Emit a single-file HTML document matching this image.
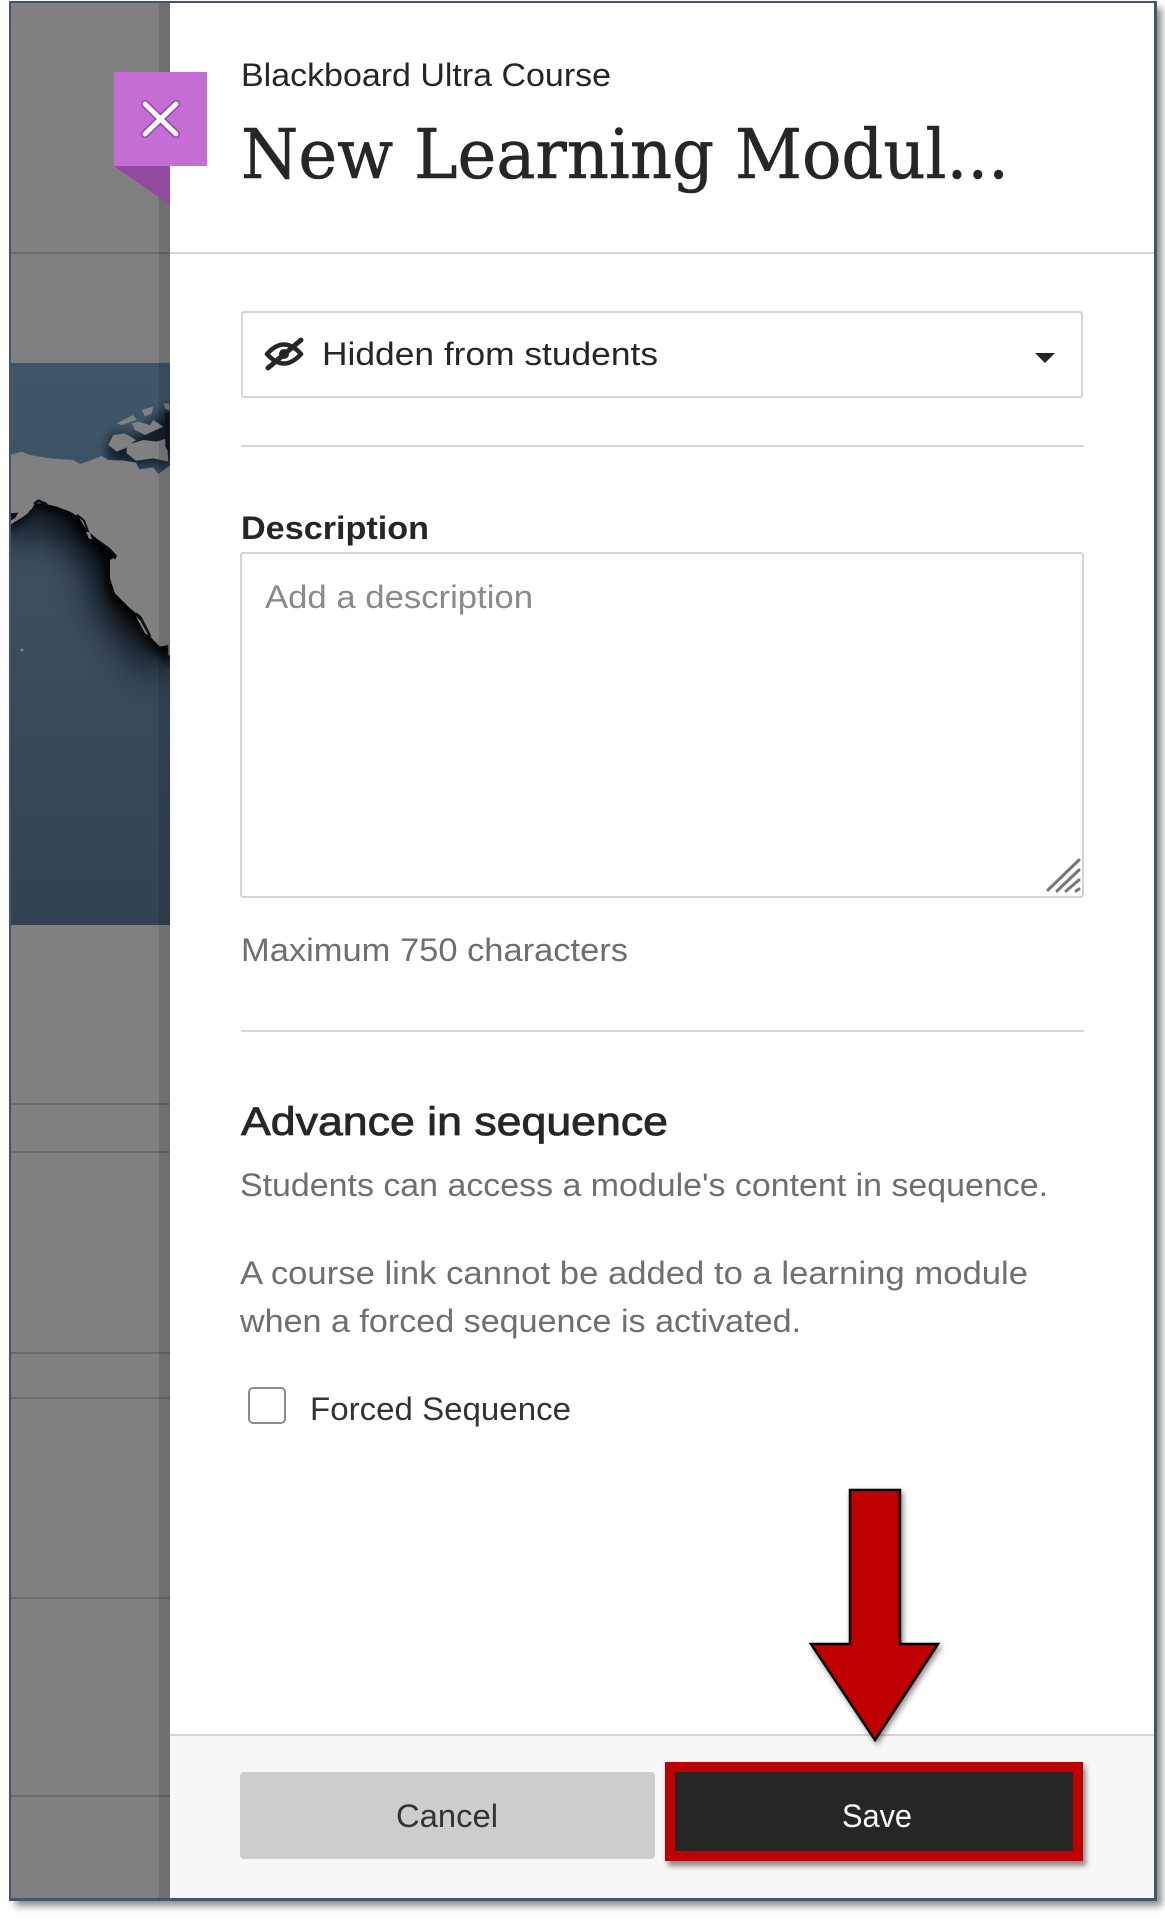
<!DOCTYPE html>
<html lang="en"><head><meta charset="utf-8"><title>New Learning Module</title>
<style>
html,body{margin:0;padding:0;background:#fff;width:1165px;height:1919px;overflow:hidden}
.a{position:absolute;box-sizing:border-box}
#frame{left:10px;top:2px;width:1147px;height:1898px;box-shadow:5px 6px 7px rgba(0,0,0,.45)}
#bg{left:10px;top:2px;width:160px;height:1898px;background:#808080}
#panel{left:170px;top:2px;width:986px;height:1898px;background:#fff}
#foot{left:170px;top:1734px;width:986px;height:166px;background:#f8f8f8;border-top:2px solid #d6d6d6}
.hr{height:2px;background:#d6d6d6}
.box{background:#fff;border:2px solid #d4d4d4;border-radius:3px}
#border{left:9px;top:1px;width:1148px;height:1900px;border:solid #44546a;border-width:2px 3px 3px 2px}
svg{position:absolute;left:0;top:0}
text{font-family:"Liberation Sans",sans-serif;font-size:32px;fill:#262626}
</style></head><body>
<div class="a" id="frame"></div>
<div class="a" id="bg"></div>
<div class="a" id="panel"></div>
<div class="a box" style="left:241px;top:311px;width:842px;height:87px"></div>
<div class="a hr" style="left:241px;top:445px;width:843px"></div>
<div class="a box" style="left:240px;top:552px;width:844px;height:346px"></div>
<div class="a hr" style="left:241px;top:1030px;width:843px"></div>
<div class="a" style="left:248px;top:1387px;width:38px;height:37px;border:2px solid #8c8c8c;border-radius:5px;background:#fff"></div>
<div class="a" id="foot"></div>
<div class="a" style="left:240px;top:1772px;width:415px;height:87px;background:#cdcdcd;border-radius:4px"></div>
<div class="a" style="left:665px;top:1762px;width:418px;height:99px;background:#262626;border:10px solid #c00000;box-shadow:3px 5px 5px rgba(0,0,0,.45)"></div>

<svg width="1165" height="1919" viewBox="0 0 1165 1919">
  <defs>
    <clipPath id="mapclip"><rect x="10" y="363" width="160" height="562"/></clipPath>
    <filter id="sh" filterUnits="userSpaceOnUse" x="-400" y="-200" width="1400" height="1400"><feGaussianBlur stdDeviation="60"/></filter>
    <filter id="sh2" filterUnits="userSpaceOnUse" x="-400" y="-200" width="1400" height="1400"><feGaussianBlur stdDeviation="14"/></filter>
    <linearGradient id="sea" x1="0" y1="0" x2="0" y2="1"><stop offset="0" stop-color="#3f566a"/><stop offset="1" stop-color="#334351"/></linearGradient>
    <filter id="ds" x="-20%" y="-20%" width="140%" height="140%"><feDropShadow dx="2" dy="3" stdDeviation="3" flood-color="#000" flood-opacity=".45"/></filter>
  </defs>

  <g clip-path="url(#mapclip)">
    <rect x="10" y="363" width="160" height="562" fill="url(#sea)"/>
    <g transform="translate(10,390) scale(.3333)">
      <path d="M0 260 L340 260 L500 260 L500 810 L475 795 L450 770 L420 740 L385 675 L360 655 L315 610 L300 565 L300 510 L300 480 L265 450 L230 420 L205 380 L180 365 L140 350 L100 340 L75 340 L60 365 L40 380 L0 405Z" fill="#000" filter="url(#sh)" transform="translate(-40,60)"/>
      <path d="M0 260 L340 260 L500 260 L500 810 L475 795 L450 770 L420 740 L385 675 L360 655 L315 610 L300 565 L300 510 L300 480 L265 450 L230 420 L205 380 L180 365 L140 350 L100 340 L75 340 L60 365 L40 380 L0 405Z" fill="#000" filter="url(#sh2)" transform="translate(-12,18)" opacity=".9"/>
      <path d="M290 170 L310 130 L378 140 L470 60 L500 40 L500 225 L380 225 L300 215Z" fill="#0b1722" filter="url(#sh2)" opacity=".85"/>
      <!-- mainland -->
      <path d="M0 195 L35 185 L60 195 L120 205 L190 210 L210 222 L240 212 L275 198 L295 210 L340 212 L378 218 L388 238 L430 232 L445 252 L478 228 L500 228 L500 810 L475 795 L475 765 L450 770 L420 740 L385 675 L360 655 L315 610 L300 565 L300 510 L318 500 L300 480 L265 450 L230 420 L205 380 L180 365 L140 350 L100 340 L75 340 L60 365 L40 380 L0 405Z" fill="#808080"/>
      <!-- coastal detail -->
      <g fill="none" stroke="#0a1118" stroke-linecap="round">
        <path d="M75 340 L85 332 L108 342" stroke-width="8"/>
        <path d="M203 376 L222 392 L232 418 M232 420 L246 448" stroke-width="6"/>
        <path d="M265 452 L300 478 L318 498 L314 505" stroke-width="6"/>
        <path d="M380 672 L392 682 L420 738" stroke-width="7"/>
        <path d="M62 362 L50 385" stroke-width="6"/>
      </g>
      <path d="M0 370 L25 368 L15 385 L0 392Z" fill="#0a1118"/>
      <path d="M228 425 L240 428 L246 448 L236 445Z" fill="#808080"/>
      <path d="M378 680 L390 690 L415 735 L405 730Z" fill="#808080"/>
      <!-- arctic islands -->
      <path d="M295 165 L310 135 L345 130 L378 150 L345 175 L320 185Z" fill="#808080"/>
      <path d="M350 165 L400 150 L440 155 L470 145 L475 215 L430 205 L378 212 L350 190Z" fill="#808080"/>
      <path d="M320 100 L370 75 L380 90 L335 105Z" fill="#808080"/>
      <path d="M365 100 L385 95 L420 105 L430 90 L460 110 L405 135 L375 120Z" fill="#808080"/>
      <path d="M395 60 L430 50 L425 70 L405 80Z" fill="#808080"/>
      <path d="M460 40 L478 40 L478 62 L466 55Z" fill="#808080"/>
      <path d="M465 68 L478 65 L478 190 L466 170Z" fill="#0d1822"/>
      <circle cx="36" cy="780" r="4" fill="#8a8a8a"/>
    </g>
  </g>
  <g fill="#6b6b6b">
    <rect x="10" y="252" width="160" height="2"/>
    <rect x="10" y="1103" width="160" height="2"/>
    <rect x="10" y="1151" width="160" height="2"/>
    <rect x="10" y="1352" width="160" height="2"/>
    <rect x="10" y="1397" width="160" height="2"/>
    <rect x="10" y="1597" width="160" height="2"/>
    <rect x="10" y="1795" width="160" height="2"/>
  </g>
  <rect x="159" y="2" width="11" height="1898" fill="#000" opacity=".13"/>
  <rect x="170" y="252" width="986" height="2" fill="#d6d6d6"/>

  <!-- close tab -->
  <polygon points="114,166 170,166 170,205" fill="#924a9e"/>
  <rect x="114" y="72" width="93" height="94" fill="#c36dd5"/>
  <g stroke-linecap="round">
    <path d="M145 104 L176 134 M176 104 L145 134" stroke="#9448a8" stroke-width="8"/>
    <path d="M145 104 L176 134 M176 104 L145 134" stroke="#fff" stroke-width="5"/>
  </g>

  <!-- header -->
  <text x="241" y="86" textLength="370" lengthAdjust="spacingAndGlyphs">Blackboard Ultra Course</text>
  <text x="241" y="178" textLength="768" lengthAdjust="spacingAndGlyphs" style="font-family:'DejaVu Serif','Liberation Serif',serif;font-size:68px;stroke:#262626;stroke-width:.6px">New Learning Modul...</text>

  <!-- select -->
  <g fill="none" stroke="#262626" stroke-width="4.5" stroke-linecap="round" stroke-linejoin="round">
    <path d="M267 354 Q284 335 301 354 Q284 373 267 354Z"/>
    <path d="M268 368 L301 340" stroke-width="5"/>
  </g>
  <circle cx="284" cy="354" r="5" fill="#262626"/>
  <text x="322" y="365" textLength="336" lengthAdjust="spacingAndGlyphs">Hidden from students</text>
  <polygon points="1035,353 1055,353 1045,363" fill="#262626"/>

  <!-- description -->
  <text x="241" y="539" textLength="188" lengthAdjust="spacingAndGlyphs" font-weight="700">Description</text>
  <text x="265" y="608" textLength="268" lengthAdjust="spacingAndGlyphs" style="fill:#8a8a8a">Add a description</text>
  <g stroke="#777" stroke-width="3" stroke-linecap="round">
    <path d="M1048 890 L1079 860 M1057 891 L1079 870 M1066 891 L1079 880 M1076 891 L1079 889"/>
  </g>
  <text x="241" y="961" textLength="387" lengthAdjust="spacingAndGlyphs" style="fill:#6f6f6f">Maximum 750 characters</text>

  <!-- sequence -->
  <text x="241" y="1135" textLength="427" lengthAdjust="spacingAndGlyphs" style="font-size:40px;stroke:#262626;stroke-width:.8px">Advance in sequence</text>
  <text x="240" y="1196" textLength="808" lengthAdjust="spacingAndGlyphs" style="fill:#6f6f6f">Students can access a module's content in sequence.</text>
  <text x="240" y="1284" textLength="788" lengthAdjust="spacingAndGlyphs" style="fill:#6f6f6f">A course link cannot be added to a learning module</text>
  <text x="240" y="1332" textLength="561" lengthAdjust="spacingAndGlyphs" style="fill:#6f6f6f">when a forced sequence is activated.</text>
  <text x="310" y="1420" textLength="261" lengthAdjust="spacingAndGlyphs" style="fill:#333">Forced Sequence</text>

  <!-- footer -->
  <text x="396" y="1827" textLength="102" lengthAdjust="spacingAndGlyphs" style="fill:#333">Cancel</text>
  <text x="842" y="1827" textLength="70" lengthAdjust="spacingAndGlyphs" style="fill:#fff">Save</text>

  <!-- arrow -->
  <polygon points="850,1490 900,1490 900,1644 938,1644 875,1740 811,1644 850,1644" fill="#c00000" stroke="#000" stroke-width="2.5" filter="url(#ds)"/>
</svg>
<div class="a" id="border"></div>
</body></html>
